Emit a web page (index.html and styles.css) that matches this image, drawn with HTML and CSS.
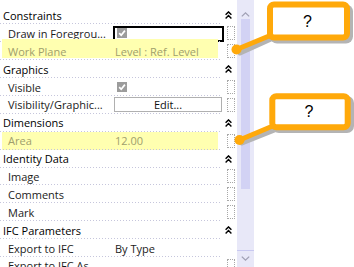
FILE: index.html
```html
<!DOCTYPE html>
<html>
<head>
<meta charset="utf-8">
<link rel="stylesheet" href="styles.css">
</head>
<body>
<div class="screen">
  <div class="panel">
    <div class="row group"><span class="gname">Constraints</span><span class="aux"><svg class="chev" width="7" height="8" viewBox="0 0 7 8"><path d="M0.6 3.8 L3.5 0.9 L6.4 3.8 M0.6 7.4 L3.5 4.5 L6.4 7.4" fill="none" stroke="#000" stroke-width="1.4"/></svg></span></div>
    <div class="row prop"><span class="name">Draw in Foregrou...</span><span class="value"><svg class="check" width="10" height="10" viewBox="0 0 10 10"><rect width="10" height="10" fill="#9c9c9c"/><path d="M2.2 5.2 L4.2 7.3 L7.9 2.6" fill="none" stroke="#fff" stroke-width="1.7"/></svg></span><span class="aux"><span class="assoc"></span></span><span class="editor"></span></div>
    <div class="row prop hl hl-up"><span class="name dim">Work Plane</span><span class="value dim">Level : Ref. Level</span><span class="aux"><span class="assoc"></span></span></div>
    <div class="row group"><span class="gname">Graphics</span><span class="aux"><svg class="chev" width="7" height="8" viewBox="0 0 7 8"><path d="M0.6 3.8 L3.5 0.9 L6.4 3.8 M0.6 7.4 L3.5 4.5 L6.4 7.4" fill="none" stroke="#000" stroke-width="1.4"/></svg></span></div>
    <div class="row prop"><span class="name">Visible</span><span class="value"><svg class="check" width="10" height="10" viewBox="0 0 10 10"><rect width="10" height="10" fill="#9c9c9c"/><path d="M2.2 5.2 L4.2 7.3 L7.9 2.6" fill="none" stroke="#fff" stroke-width="1.7"/></svg></span><span class="aux"><span class="assoc"></span></span></div>
    <div class="row prop"><span class="name">Visibility/Graphic...</span><span class="value btncell"><span class="btn">Edit...</span></span><span class="aux"><span class="assoc"></span></span></div>
    <div class="row group"><span class="gname">Dimensions</span><span class="aux"><svg class="chev" width="7" height="8" viewBox="0 0 7 8"><path d="M0.6 3.8 L3.5 0.9 L6.4 3.8 M0.6 7.4 L3.5 4.5 L6.4 7.4" fill="none" stroke="#000" stroke-width="1.4"/></svg></span></div>
    <div class="row prop hl"><span class="name dim">Area</span><span class="value dim">12.00</span><span class="aux"><span class="assoc"></span></span></div>
    <div class="row group"><span class="gname">Identity Data</span><span class="aux"><svg class="chev" width="7" height="8" viewBox="0 0 7 8"><path d="M0.6 3.8 L3.5 0.9 L6.4 3.8 M0.6 7.4 L3.5 4.5 L6.4 7.4" fill="none" stroke="#000" stroke-width="1.4"/></svg></span></div>
    <div class="row prop"><span class="name">Image</span><span class="value"></span><span class="aux"><span class="assoc"></span></span></div>
    <div class="row prop"><span class="name">Comments</span><span class="value"></span><span class="aux"><span class="assoc"></span></span></div>
    <div class="row prop"><span class="name">Mark</span><span class="value"></span><span class="aux"><span class="assoc"></span></span></div>
    <div class="row group"><span class="gname">IFC Parameters</span><span class="aux"><svg class="chev" width="7" height="8" viewBox="0 0 7 8"><path d="M0.6 3.8 L3.5 0.9 L6.4 3.8 M0.6 7.4 L3.5 4.5 L6.4 7.4" fill="none" stroke="#000" stroke-width="1.4"/></svg></span></div>
    <div class="row prop"><span class="name">Export to IFC</span><span class="value">By Type</span><span class="aux"></span></div>
    <div class="row prop"><span class="name">Export to IFC As</span><span class="value"></span><span class="aux"><span class="assoc"></span></span></div>
  </div>
  <div class="scrollbar">
    <svg class="arrow" width="9" height="5" viewBox="0 0 9 5"><path d="M0.8 4.4 L4.5 0.9 L8.2 4.4" fill="none" stroke="#a0a0b4" stroke-width="1.3"/></svg>
    <div class="thumb"></div>
    <div class="track-rest"></div>
    <div class="arrow-line"></div>
    <svg class="arrow down" width="9" height="5" viewBox="0 0 9 5"><path d="M0.8 0.6 L4.5 4.1 L8.2 0.6" fill="none" stroke="#a0a0b4" stroke-width="1.3"/></svg>
  </div>
  <div class="blank"></div>
  <svg class="callouts" width="354" height="267" viewBox="0 0 354 267">
    <g fill="#b4b4b4" stroke="#b4b4b4">
      <line x1="271" y1="39" x2="240" y2="53" stroke-width="5" stroke-linecap="round"/>
      <rect x="270" y="4.5" width="83" height="39" rx="7" stroke="none"/>
      <line x1="277" y1="129" x2="242" y2="143" stroke-width="5" stroke-linecap="round"/>
      <rect x="272" y="96" width="82" height="37" rx="7" stroke="none"/>
    </g>
    <g fill="#ffa90a" stroke="#ffa90a">
      <line x1="269" y1="36" x2="236.5" y2="49.5" stroke-width="5" stroke-linecap="round"/>
      <circle cx="236.5" cy="49.5" r="5" stroke="none"/>
      <line x1="274" y1="125.5" x2="239.5" y2="140" stroke-width="5" stroke-linecap="round"/>
      <circle cx="239.5" cy="140" r="5" stroke="none"/>
    </g>
    <rect x="270" y="4.5" width="77" height="33" rx="4" fill="#fff" stroke="#ffa90a" stroke-width="6"/>
    <rect x="272.3" y="96.3" width="75.4" height="31" rx="4" fill="#fff" stroke="#ffa90a" stroke-width="6"/>
    <text x="307.5" y="27" class="q">?</text>
    <text x="309" y="117" class="q">?</text>
  </svg>
</div>
</body>
</html>
```

FILE: styles.css
```css
* { box-sizing: border-box; }
html, body { margin: 0; padding: 0; background: #fff; }
body {
  width: 354px;
  height: 267px;
  overflow: hidden;
  font-family: "Open Sans", "Noto Sans", sans-serif;
  font-size: 11px;
  color: #1b1b1b;
}
.screen {
  position: relative;
  width: 354px;
  height: 267px;
  display: flex;
}
.panel {
  width: 237px;
  flex: none;
  padding-top: 6.5px;
}
.row {
  position: relative;
  z-index: 0;
  display: grid;
  grid-template-columns: 113px 109px 15px;
  height: 17.9px;
  align-items: center;
}
.row::after {
  content: "";
  position: absolute;
  left: 0;
  bottom: 0;
  width: 222px;
  height: 1px;
  background-image: linear-gradient(to right, #c6c6dc 1px, transparent 1px);
  background-size: 3px 1px;
}
.hl::before {
  content: "";
  position: absolute;
  left: 2px;
  width: 216px;
  top: 0;
  bottom: 0;
  background: #ffffb0;
  z-index: -1;
}
.hl-up::before {
  top: -3px;
  bottom: 2px;
}
.gname {
  grid-column: 1 / 3;
  padding-left: 3px;
  color: #000;
  white-space: nowrap;
}
.name {
  padding-left: 8px;
  white-space: nowrap;
  overflow: hidden;
}
.value {
  padding-left: 2px;
  white-space: nowrap;
  overflow: hidden;
  display: flex;
  align-items: center;
  height: 100%;
}
.dim { color: #a09e6c; }
.check { display: block; margin-left: 2px; }
.btncell { padding: 1.5px 0 1.5px 1px; }
.btn {
  display: flex;
  align-items: center;
  justify-content: center;
  width: 108px;
  height: 100%;
  border: 1px solid #b0b0b0;
  background: #fff;
  color: #111;
}
.aux {
  height: 100%;
  display: flex;
  align-items: center;
  padding-left: 4.7px;
}
.group .aux { padding-left: 3px; }
.chev { display: block; }
.assoc {
  display: block;
  width: 8px;
  height: 14px;
  border: 1px dotted #a8a8a8;
}
.editor {
  position: absolute;
  left: 113px;
  top: 1.3px;
  width: 111px;
  height: 16.4px;
  border: 2px solid #000;
}
.scrollbar {
  width: 17px;
  flex: none;
  height: 267px;
  background: #e8e8f8;
  display: flex;
  flex-direction: column;
  align-items: center;
  padding-top: 12px;
}
.arrow { display: block; flex: none; }
.thumb {
  flex: none;
  width: 9px;
  height: 170px;
  margin-top: 1.5px;
  background: #d2d2f4;
}
.track-rest { flex: 1; }
.arrow-line {
  flex: none;
  width: 17px;
  height: 1px;
  background: #c8c8f0;
  margin-bottom: 5px;
}
.arrow.down { margin-bottom: 6px; }
.blank { flex: 1; }
.callouts {
  position: absolute;
  left: 0;
  top: 0;
  pointer-events: none;
}
.q {
  font-family: "Liberation Sans", Arial, sans-serif;
  font-size: 16px;
  fill: #000;
  text-anchor: middle;
}
```
